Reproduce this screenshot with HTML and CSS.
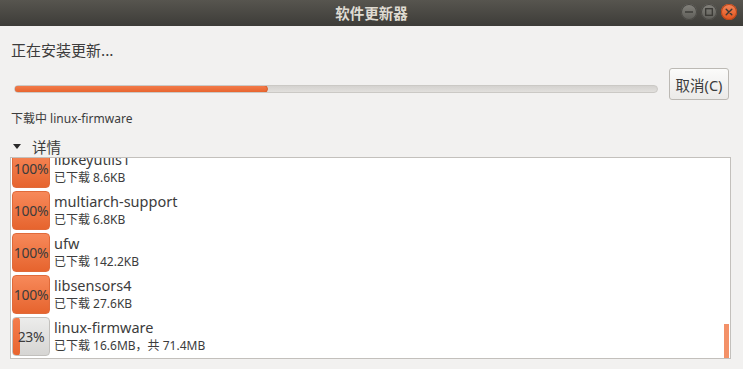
FILE: index.html
```html
<!DOCTYPE html>
<html lang="zh">
<head>
<meta charset="utf-8">
<title>软件更新器</title>
<link rel="stylesheet" href="styles.css">
</head>
<body>
<div class="titlebar">
  <div class="tb-spacer"></div>
  <div class="tb-title">软件更新器</div>
  <div class="tb-buttons">
    <span class="wm wm-min"><svg width="16" height="16" viewBox="0 0 16 16"><rect x="4" y="7.3" width="8" height="1.4" fill="#3a3935"/></svg></span>
    <span class="wm wm-max"><svg width="16" height="16" viewBox="0 0 16 16"><rect x="4.7" y="4.7" width="6.6" height="6.6" fill="none" stroke="#3a3935" stroke-width="1.3"/></svg></span>
    <span class="wm wm-close"><svg width="16" height="16" viewBox="0 0 16 16"><path d="M5.2 5.2 L10.8 10.8 M10.8 5.2 L5.2 10.8" stroke="#3a3935" stroke-width="1.4" stroke-linecap="round"/></svg></span>
  </div>
</div>
<div class="content">
  <div class="status">正在安装更新...</div>
  <div class="progress-row">
    <div class="progress"><div class="progress-fill" style="width:39.6%"></div></div>
    <button class="btn">取消(C)</button>
  </div>
  <div class="downloading">下载中 linux-firmware</div>
  <div class="details"><span class="tri"></span><span>详情</span></div>
  <div class="listbox">
    <div class="list">
      <div class="row"><div class="pct full">100%</div><div class="info"><div class="name">libkeyutils1</div><div class="sub">已下载 8.6KB</div></div></div>
      <div class="row"><div class="pct full">100%</div><div class="info"><div class="name">multiarch-support</div><div class="sub">已下载 6.8KB</div></div></div>
      <div class="row"><div class="pct full">100%</div><div class="info"><div class="name">ufw</div><div class="sub">已下载 142.2KB</div></div></div>
      <div class="row"><div class="pct full">100%</div><div class="info"><div class="name">libsensors4</div><div class="sub">已下载 27.6KB</div></div></div>
      <div class="row"><div class="pct partial"><span class="pct-fill" style="width:23%"></span><span class="pct-text">23%</span></div><div class="info"><div class="name">linux-firmware</div><div class="sub">已下载 16.6MB，共 71.4MB</div></div></div>
    </div>
    <div class="scroll-ind"></div>
  </div>
</div>
</body>
</html>
```
FILE: styles.css
```css
html, body {
  margin: 0;
  padding: 0;
}
body {
  width: 743px;
  height: 369px;
  overflow: hidden;
  background: #f2f1f0;
  color: #3c3c3c;
  font-family: "Noto Sans", "Noto Sans CJK SC", sans-serif;
}
.titlebar {
  height: 26px;
  display: grid;
  grid-template-columns: 1fr auto 1fr;
  align-items: center;
  background: linear-gradient(#57554f, #3d3c38);
}
.tb-title {
  color: #dfdbd2;
  font-size: 14.5px;
  font-weight: bold;
  line-height: 26px;
  font-family: "Noto Sans CJK SC", sans-serif;
}
.tb-buttons {
  display: flex;
  justify-content: flex-end;
  gap: 4px;
  padding-right: 6px;
  margin-top: -2px;
}
.wm {
  width: 16px;
  height: 16px;
  border-radius: 50%;
  display: block;
  box-sizing: border-box;
}
.wm svg { display: block; }
.wm-min, .wm-max {
  background: linear-gradient(#85837d, #5d5c57);
  box-shadow: inset 0 0 0 1px #4a4945;
}
.wm-close {
  background: linear-gradient(#f4875a, #e0531c);
  box-shadow: inset 0 0 0 1px #b8461b;
}
.content {
  padding: 14px 12px 0 10px;
}
.status {
  font-size: 15px;
  line-height: 20px;
  padding-left: 1px;
  font-family: "Noto Sans CJK SC", sans-serif;
}
.progress-row {
  display: flex;
  align-items: flex-start;
  margin-top: 8px;
  gap: 11px;
}
.progress {
  flex: 1;
  margin-left: 4px;
  margin-top: 17px;
  height: 8px;
  box-sizing: border-box;
  border-radius: 4px;
  background: linear-gradient(#d4d2cf, #e2e0dd);
  border: 1px solid #cbc9c5;
  position: relative;
  overflow: hidden;
}
.progress-fill {
  box-sizing: border-box;
  margin: -1px;
  height: 8px;
  border-radius: 4px;
  background: linear-gradient(#f27a4a, #e8652f);
  border: 1px solid #d95b28;
}
.btn {
  width: 60px;
  height: 32px;
  margin: 0 2px 0 0;
  padding: 0;
  border: 1px solid #bcb9b4;
  border-radius: 3px;
  background: linear-gradient(#fbfbfa, #ebeae8);
  color: #3c3c3c;
  font-size: 14.5px;
  font-family: "Noto Sans", "Noto Sans CJK SC", sans-serif;
}
.downloading {
  margin-top: 11px;
  font-size: 12px;
  line-height: 16px;
  padding-left: 1px;
}
.details {
  margin-top: 9px;
  display: flex;
  align-items: center;
  font-size: 14.5px;
  line-height: 20px;
  height: 21px;
}
.tri {
  width: 0;
  height: 0;
  border-left: 4px solid transparent;
  border-right: 4px solid transparent;
  border-top: 5px solid #2a2a2a;
  margin: 0 11px 0 3px;
}
.listbox {
  position: relative;
  width: 721px;
  height: 202px;
  box-sizing: border-box;
  border: 1px solid #c3c0bc;
  background: #ffffff;
  overflow: hidden;
}
.list {
  margin-top: -10px;
}
.row {
  display: flex;
  align-items: flex-start;
  height: 42px;
  box-sizing: border-box;
  padding: 1px 0 2px 1px;
}
.pct {
  width: 38px;
  height: 39px;
  box-sizing: border-box;
  border-radius: 4px;
  display: flex;
  align-items: center;
  justify-content: center;
  font-size: 14px;
  letter-spacing: -0.3px;
  color: #3c3c3c;
  position: relative;
  overflow: hidden;
}
.pct.full {
  background: linear-gradient(#f7895a, #e6642e);
  border: 1px solid #e06a3a;
}
.pct.partial {
  background: linear-gradient(#ececeb, #d6d5d3);
  border: 1px solid #c2c0bd;
}
.pct-fill {
  position: absolute;
  left: -1px;
  top: -1px;
  bottom: -1px;
  border-radius: 4px;
  background: linear-gradient(#f57e4e, #e8642e);
}
.pct-text { position: relative; }
.info {
  margin-left: 4px;
  display: flex;
  flex-direction: column;
}
.name {
  font-size: 14.5px;
  line-height: 20px;
}
.sub {
  font-size: 12px;
  line-height: 18px;
}
.scroll-ind {
  position: absolute;
  right: 1px;
  bottom: 0;
  width: 5px;
  height: 34px;
  background: #f39168;
}
```
